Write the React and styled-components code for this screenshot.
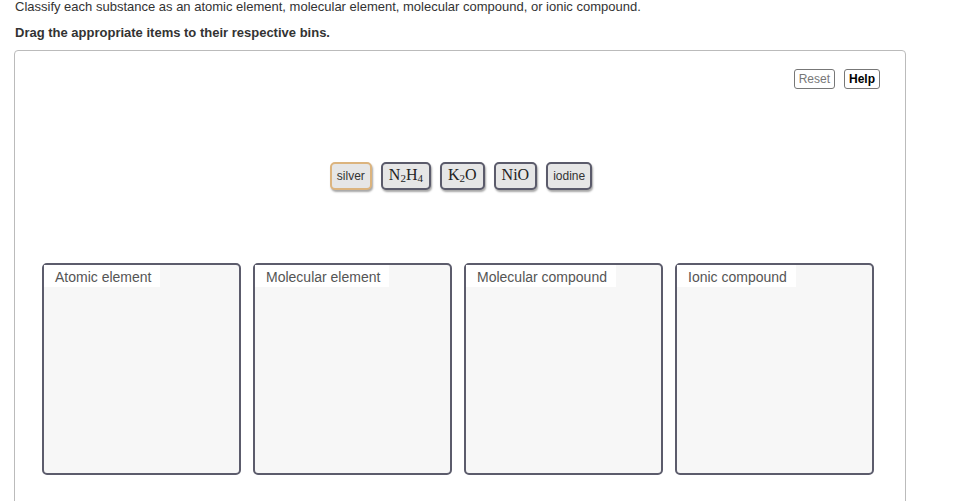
import styled, { createGlobalStyle } from 'styled-components';

const GlobalStyle = createGlobalStyle`
  body {
    margin: 0;
    background: #fff;
    font-family: 'Liberation Sans', Arial, sans-serif;
  }
`;

const Page = styled.div`
  width: 954px;
  height: 501px;
  overflow: hidden;
  padding: 0 0 0 14px;
  box-sizing: border-box;
`;

const Prompt = styled.p`
  margin: 0;
  font-size: 13px;
  line-height: 14px;
  color: #333;
  padding-left: 1px;
`;

const Instruction = styled.p`
  margin: 11px 0 0;
  font-size: 13px;
  line-height: 15px;
  font-weight: bold;
  color: #333;
  padding-left: 1px;
`;

const Panel = styled.div`
  margin-top: 10px;
  width: 892px;
  height: 480px;
  box-sizing: border-box;
  border: 1px solid #bbb;
  border-radius: 4px;
  padding: 18px 25px 0 27px;
`;

const Toolbar = styled.div`
  display: flex;
  justify-content: flex-end;
  gap: 9px;
`;

const ToolButton = styled.button`
  height: 20px;
  padding: 0 4px;
  background: #fff;
  border: 1px solid #777;
  border-radius: 3px;
  font-family: 'Liberation Sans', Arial, sans-serif;
  font-size: 12px;
  font-weight: ${(p) => (p.$strong ? 'bold' : 'normal')};
  color: ${(p) => (p.$strong ? '#000' : '#777')};
`;

const Items = styled.div`
  display: flex;
  justify-content: center;
  gap: 9px;
  margin-top: 73px;
`;

const Chip = styled.div`
  height: 28px;
  box-sizing: border-box;
  padding: 0 ${(p) => (p.$word ? 5 : 6)}px;
  display: flex;
  align-items: center;
  background: #e6e6e6;
  border: 2px solid ${(p) => (p.$selected ? '#dcb47e' : '#5b5b6b')};
  border-radius: 5px;
  box-shadow: 1px 2px 2px rgba(0, 0, 0, 0.35);
  color: #222;
`;

const Word = styled.span`
  font-family: 'Liberation Sans', Arial, sans-serif;
  font-size: 12px;
  line-height: 14px;
  margin-top: -1px;
  color: #333;
`;

const Formula = styled.span`
  font-family: 'Liberation Serif', 'Times New Roman', serif;
  font-size: 16px;
  line-height: 16px;
  margin-top: -2px;
  color: #222;
  sub {
    font-size: 11px;
    vertical-align: -2px;
    line-height: 0;
  }
`;

const Bins = styled.div`
  display: flex;
  gap: 12px;
  margin-top: 73px;
`;

const Bin = styled.div`
  width: 199px;
  height: 212px;
  box-sizing: border-box;
  background: #f7f7f7;
  border: 2px solid #5c5c6c;
  border-radius: 5px;
`;

const BinLabel = styled.div`
  display: inline-block;
  background: #fff;
  padding: 5px 9px 2px 11px;
  font-size: 14px;
  line-height: 15px;
  color: #555;
`;

const items = [
  { key: 'silver', node: <Word>silver</Word>, word: true, selected: true },
  { key: 'n2h4', node: <Formula>N<sub>2</sub>H<sub>4</sub></Formula> },
  { key: 'k2o', node: <Formula>K<sub>2</sub>O</Formula> },
  { key: 'nio', node: <Formula>NiO</Formula> },
  { key: 'iodine', node: <Word>iodine</Word>, word: true },
];

const bins = ['Atomic element', 'Molecular element', 'Molecular compound', 'Ionic compound'];

export default function App() {
  return (
    <>
      <GlobalStyle />
      <Page>
        <Prompt>
          Classify each substance as an atomic element, molecular element, molecular compound, or ionic compound.
        </Prompt>
        <Instruction>Drag the appropriate items to their respective bins.</Instruction>
        <Panel>
          <Toolbar>
            <ToolButton>Reset</ToolButton>
            <ToolButton $strong>Help</ToolButton>
          </Toolbar>
          <Items>
            {items.map((it) => (
              <Chip key={it.key} $word={it.word} $selected={it.selected}>
                {it.node}
              </Chip>
            ))}
          </Items>
          <Bins>
            {bins.map((b) => (
              <Bin key={b}>
                <BinLabel>{b}</BinLabel>
              </Bin>
            ))}
          </Bins>
        </Panel>
      </Page>
    </>
  );
}
